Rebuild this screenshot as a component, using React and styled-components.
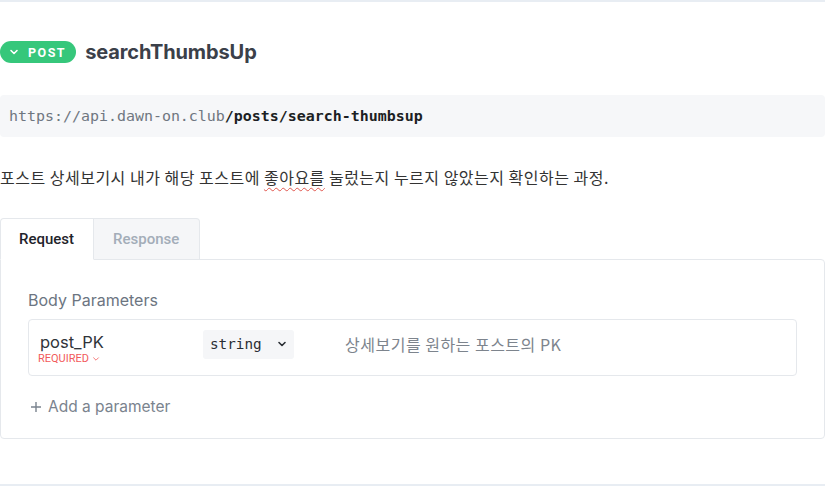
import React from 'react';
import styled, { createGlobalStyle } from 'styled-components';

const GlobalStyle = createGlobalStyle`
  html, body {
    margin: 0;
    padding: 0;
    background: #fff;
  }
  body {
    font-family: Inter, "Noto Sans CJK KR", sans-serif;
    color: #333;
  }
`;

const Page = styled.div`
  width: 825px;
  height: 486px;
  box-sizing: border-box;
  border-top: 2px solid #e8edf3;
  border-bottom: 2px solid #e8edf3;
  display: flex;
  flex-direction: column;
`;

const Header = styled.div`
  display: flex;
  align-items: center;
  gap: 9px;
  margin-top: 38px;
`;

const MethodBadge = styled.div`
  display: flex;
  align-items: center;
  gap: 9px;
  height: 22px;
  padding: 0 10px 0 9px;
  border-radius: 11px;
  background: ${(p) => p.color};
  color: #fff;
  font-family: Roboto, sans-serif;
  font-weight: 700;
  font-size: 12.5px;
  letter-spacing: 1.5px;
`;

const Title = styled.h1`
  margin: 0;
  font-family: Inter, sans-serif;
  font-size: 20px;
  font-weight: 700;
  color: #3b4049;
  letter-spacing: -0.1px;
`;

const UrlBox = styled.div`
  margin-top: 31px;
  height: 42px;
  display: flex;
  align-items: center;
  padding-left: 9px;
  background: #f6f7f9;
  border-radius: 4px;
  font-family: "DejaVu Sans Mono", monospace;
  font-size: 14.95px;
`;

const Host = styled.span`
  color: #6f7680;
`;

const Path = styled.span`
  color: #1c1f24;
  font-weight: 700;
`;

const Description = styled.p`
  margin: 29px 0 0;
  font-family: "Noto Sans CJK KR", sans-serif;
  font-size: 16px;
  letter-spacing: 0.5px;
  color: #333;
  line-height: 22px;
`;

const Typo = styled.span`
  text-decoration: underline wavy #e0574f;
  text-decoration-thickness: 1px;
  text-underline-offset: 3px;
`;

const Tabs = styled.div`
  display: flex;
  margin-top: 30px;
`;

const Tab = styled.div`
  height: 42px;
  display: flex;
  align-items: center;
  padding: 0 ${(p) => (p.active ? '18px' : '19px')};
  font-family: Roboto, sans-serif;
  font-size: 15px;
  font-weight: 500;
  box-sizing: border-box;
  border: 1px solid #e5e8ec;
  border-left-width: ${(p) => (p.first ? '1px' : '0')};
  border-bottom: ${(p) => (p.active ? '1px solid #fff' : '1px solid #e5e8ec')};
  border-radius: ${(p) => (p.first ? '4px 0 0 0' : '0 4px 0 0')};
  background: ${(p) => (p.active ? '#fff' : '#f5f6f8')};
  color: ${(p) => (p.active ? '#1f242b' : '#a3adb8')};
  width: ${(p) => p.width}px;
  margin-bottom: -1px;
  position: relative;
  z-index: 1;
`;

const Panel = styled.div`
  border: 1px solid #e5e8ec;
  border-radius: 0 4px 4px 4px;
  height: 180px;
  box-sizing: border-box;
  padding: 30px 27px 0 27px;
`;

const SectionLabel = styled.div`
  font-size: 16px;
  color: #6c7581;
  line-height: 20px;
`;

const ParamRow = styled.div`
  margin-top: 9px;
  height: 57px;
  box-sizing: border-box;
  border: 1px solid #e5e8ec;
  border-radius: 4px;
  display: flex;
  align-items: center;
  padding-left: 9px;
`;

const ParamName = styled.div`
  width: 165px;
  display: flex;
  flex-direction: column;
  margin-top: 2px;
`;

const Name = styled.div`
  font-size: 16.5px;
  color: #30343a;
  line-height: 20px;
  padding-left: 2px;
`;

const Required = styled.div`
  display: flex;
  align-items: center;
  gap: 3px;
  font-family: Roboto, sans-serif;
  font-size: 11px;
  color: #f25a5a;
  line-height: 12px;
  margin-top: 1px;
`;

const TypeSelect = styled.div`
  height: 29px;
  width: 91px;
  box-sizing: border-box;
  margin-top: -7px;
  padding: 0 7px;
  display: flex;
  align-items: center;
  justify-content: space-between;
  background: #f5f6f8;
  border-radius: 3px;
  font-family: "DejaVu Sans Mono", monospace;
  font-size: 14.3px;
  color: #2a2e34;
`;

const ParamDesc = styled.div`
  margin-left: 51px;
  margin-top: -7px;
  font-family: "Noto Sans CJK KR", sans-serif;
  font-size: 16px;
  letter-spacing: 0.5px;
  color: #7d848d;
`;

const AddParam = styled.div`
  margin-top: 21px;
  display: flex;
  align-items: center;
  gap: 6px;
  font-size: 15.5px;
  color: #7a838e;
  padding-left: 2px;
`;

const Chevron = ({ size = 10, stroke = 'currentColor', width = 1.8 }) => (
  <svg width={size} height={size} viewBox="0 0 10 10" fill="none">
    <path d="M2 3.5 L5 6.5 L8 3.5" stroke={stroke} strokeWidth={width} strokeLinecap="round" strokeLinejoin="round" />
  </svg>
);

const Plus = () => (
  <svg width="12" height="12" viewBox="0 0 12 12" fill="none">
    <path d="M6 1 V11 M1 6 H11" stroke="#7a838e" strokeWidth="1.4" />
  </svg>
);

export default function App() {
  return (
    <>
      <GlobalStyle />
      <Page>
        <Header>
          <MethodBadge color="#36c77b">
            <Chevron size={10} width={1.6} />
            POST
          </MethodBadge>
          <Title>searchThumbsUp</Title>
        </Header>
        <UrlBox>
          <Host>https://api.dawn-on.club</Host>
          <Path>/posts/search-thumbsup</Path>
        </UrlBox>
        <Description>
          포스트 상세보기시 내가 해당 포스트에 <Typo>좋아요를</Typo> 눌렀는지 누르지 않았는지 확인하는 과정.
        </Description>
        <Tabs>
          <Tab active first width={94}>Request</Tab>
          <Tab width={106}>Response</Tab>
        </Tabs>
        <Panel>
          <SectionLabel>Body Parameters</SectionLabel>
          <ParamRow>
            <ParamName>
              <Name>post_PK</Name>
              <Required>
                REQUIRED
                <Chevron size={8} width={1} />
              </Required>
            </ParamName>
            <TypeSelect>
              string
              <Chevron size={10} width={1.6} />
            </TypeSelect>
            <ParamDesc>상세보기를 원하는 포스트의 PK</ParamDesc>
          </ParamRow>
          <AddParam>
            <Plus />
            Add a parameter
          </AddParam>
        </Panel>
      </Page>
    </>
  );
}
